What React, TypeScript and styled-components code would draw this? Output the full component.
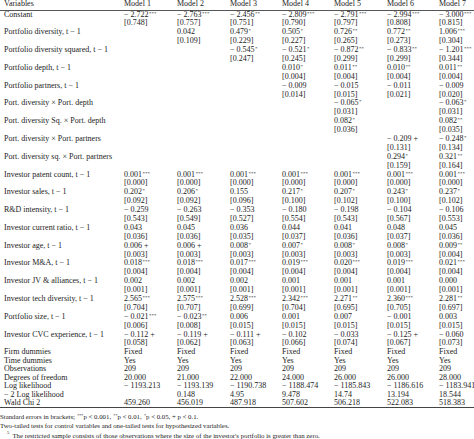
import { Fragment } from "react";
import styled, { createGlobalStyle } from "styled-components";

const GlobalStyle = createGlobalStyle`
    html, body {
        margin: 0;
        padding: 0;
        background: #ffffff;
        overflow: hidden;
    }
    body {
        font-family: "Liberation Serif", "DejaVu Serif", serif;
        color: #222222;
    }
`

const COLS = "120px 53px 53px 52px 52px 53px 52px 1fr"

const Page = styled.div`
    width: 474px;
    height: 439px;
    overflow: hidden;
    background: #ffffff;
`

const Head = styled.div`
    display: grid;
    grid-template-columns: ${COLS};
    padding-left: 4px;
    height: 9.5px;
    line-height: 8px;
    font-size: 8px;
    white-space: nowrap;
    border-bottom: 1px solid #555;
`

const Body = styled.div`
    display: flex;
    flex-direction: column;
    font-size: 8px;
    white-space: nowrap;
    border-bottom: 1px solid #444;
`

const Row = styled.div<{ $h: number }>`
    display: grid;
    grid-template-columns: ${COLS};
    padding-left: 4px;
    height: ${(props) => props.$h}px;
    line-height: ${(props) => props.$h}px;
    flex-shrink: 0;
`

const Cell = styled.div`
    overflow: visible;
`

const Stars = styled.span`
    font-size: 0.62em;
    vertical-align: 0.4em;
    line-height: 0;
    margin-left: 0.5px;
`

const Notes = styled.div`
    display: flex;
    flex-direction: column;
    padding-top: 3.3px;
    font-size: 6.8px;
    line-height: 9.5px;
    white-space: nowrap;
`

const Note = styled.div<{ $indent?: number }>`
    padding-left: ${(props) => props.$indent || 0}px;
`

const Mark = styled.sup`
    font-size: 0.7em;
    line-height: 0;
    margin-right: 3px;
`

type Entry = { label: string, coef: (string | null)[], se?: (string | null)[] }

const M = "\u2212 "
const PAIR_H = 8.9
const STAT_H = 8.45

const rows: Entry[] = [
    { label: "Constant",
      coef: [M+"2.722***", M+"2.763***", M+"2.456**", M+"2.809***", M+"2.791***", M+"2.994***", M+"3.000***"],
      se: ["[0.748]", "[0.757]", "[0.751]", "[0.790]", "[0.797]", "[0.808]", "[0.815]"] },
    { label: "Portfolio diversity, t \u2212 1",
      coef: [null, "0.042", "0.479*", "0.505*", "0.726**", "0.772**", "1.006***"],
      se: [null, "[0.109]", "[0.229]", "[0.227]", "[0.265]", "[0.273]", "[0.304]"] },
    { label: "Portfolio diversity squared, t \u2212 1",
      coef: [null, null, M+"0.545*", M+"0.521*", M+"0.872**", M+"0.833**", M+"1.201***"],
      se: [null, null, "[0.247]", "[0.245]", "[0.299]", "[0.299]", "[0.344]"] },
    { label: "Portfolio depth, t \u2212 1",
      coef: [null, null, null, "0.010*", "0.011**", "0.010**", "0.011**"],
      se: [null, null, null, "[0.004]", "[0.004]", "[0.004]", "[0.004]"] },
    { label: "Portfolio partners, t \u2212 1",
      coef: [null, null, null, M+"0.009", M+"0.015", M+"0.011", M+"0.009"],
      se: [null, null, null, "[0.014]", "[0.015]", "[0.021]", "[0.020]"] },
    { label: "Port. diversity \u00d7 Port. depth",
      coef: [null, null, null, null, M+"0.065*", null, M+"0.063*"],
      se: [null, null, null, null, "[0.031]", null, "[0.031]"] },
    { label: "Port. diversity Sq. \u00d7 Port. depth",
      coef: [null, null, null, null, "0.082*", null, "0.082**"],
      se: [null, null, null, null, "[0.036]", null, "[0.035]"] },
    { label: "Port. diversity \u00d7 Port. partners",
      coef: [null, null, null, null, null, M+"0.209 +", M+"0.248*"],
      se: [null, null, null, null, null, "[0.131]", "[0.134]"] },
    { label: "Port. diversity sq. \u00d7 Port. partners",
      coef: [null, null, null, null, null, "0.294*", "0.321**"],
      se: [null, null, null, null, null, "[0.159]", "[0.164]"] },
    { label: "Investor patent count, t \u2212 1",
      coef: Array(7).fill("0.001***"),
      se: Array(7).fill("[0.000]") },
    { label: "Investor sales, t \u2212 1",
      coef: ["0.202*", "0.206*", "0.155", "0.217*", "0.207*", "0.243*", "0.237*"],
      se: ["[0.092]", "[0.092]", "[0.096]", "[0.100]", "[0.102]", "[0.100]", "[0.102]"] },
    { label: "R&D intensity, t \u2212 1",
      coef: [M+"0.259", M+"0.263", M+"0.353", M+"0.180", M+"0.198", M+"0.104", M+"0.106"],
      se: ["[0.543]", "[0.549]", "[0.527]", "[0.554]", "[0.543]", "[0.567]", "[0.553]"] },
    { label: "Investor current ratio, t \u2212 1",
      coef: ["0.043", "0.045", "0.036", "0.044", "0.041", "0.048", "0.045"],
      se: ["[0.036]", "[0.036]", "[0.035]", "[0.037]", "[0.036]", "[0.037]", "[0.036]"] },
    { label: "Investor age, t \u2212 1",
      coef: ["0.006 +", "0.006 +", "0.008*", "0.007*", "0.008*", "0.008*", "0.009**"],
      se: ["[0.003]", "[0.003]", "[0.003]", "[0.003]", "[0.003]", "[0.003]", "[0.004]"] },
    { label: "Investor M&A, t \u2212 1",
      coef: ["0.018***", "0.018***", "0.017***", "0.019***", "0.020***", "0.019***", "0.021***"],
      se: Array(7).fill("[0.004]") },
    { label: "Investor JV & alliances, t \u2212 1",
      coef: ["0.002", "0.002", "0.002", "0.001", "0.001", "0.001", "0.000"],
      se: Array(7).fill("[0.001]") },
    { label: "Investor tech diversity, t \u2212 1",
      coef: ["2.565***", "2.575***", "2.528***", "2.342***", "2.271**", "2.360***", "2.281**"],
      se: ["[0.704]", "[0.707]", "[0.699]", "[0.704]", "[0.695]", "[0.705]", "[0.697]"] },
    { label: "Portfolio size, t \u2212 1",
      coef: [M+"0.021***", M+"0.023**", "0.006", "0.001", "0.007", M+"0.001", "0.003"],
      se: ["[0.006]", "[0.008]", "[0.015]", "[0.015]", "[0.015]", "[0.015]", "[0.015]"] },
    { label: "Investor CVC experience, t \u2212 1",
      coef: [M+"0.112 +", M+"0.119 +", M+"0.111 +", M+"0.102", M+"0.033", M+"0.125 +", M+"0.060"],
      se: ["[0.058]", "[0.062]", "[0.063]", "[0.066]", "[0.074]", "[0.067]", "[0.073]"] },
    { label: "Firm dummies", coef: Array(7).fill("Fixed") },
    { label: "Time dummies", coef: Array(7).fill("Yes") },
    { label: "Observations", coef: Array(7).fill("209") },
    { label: "Degrees of freedom",
      coef: ["20.000", "21.000", "22.000", "24.000", "26.000", "26.000", "28.000"] },
    { label: "Log likelihood",
      coef: [M+"1193.213", M+"1193.139", M+"1190.738", M+"1188.474", M+"1185.843", M+"1186.616", M+"1183.941"] },
    { label: M+"2 Log likelihood",
      coef: [null, "0.148", "4.95", "9.478", "14.74", "13.194", "18.544"] },
    { label: "Wald Chi 2",
      coef: ["459.260", "456.019", "487.918", "507.602", "506.218", "522.083", "518.383"] },
]

// splits the trailing asterisks off so they can sit raised
function Value({ text }: { text: string | null }) {
    if (!text) return <Cell />
    const m = text.match(/^(.*?)(\*+)$/)
    if (!m) return <Cell>{text}</Cell>
    return <Cell>{m[1]}<Stars>{m[2]}</Stars></Cell>
}

export default function App() {
    return (
        <Page>
            <GlobalStyle />
            <Head>
                <Cell>Variables</Cell>
                {[1, 2, 3, 4, 5, 6, 7].map((n) => <Cell key={n}>{`Model ${n}`}</Cell>)}
            </Head>
            <Body>
                {rows.map((r) => {
                    const h = r.se ? PAIR_H : STAT_H
                    return (
                        <Fragment key={r.label}>
                            <Row $h={h}>
                                <Cell>{r.label}</Cell>
                                {r.coef.map((c, i) => <Value key={i} text={c} />)}
                            </Row>
                            {r.se && (
                                <Row $h={h}>
                                    <Cell />
                                    {r.se.map((s, i) => <Value key={i} text={s} />)}
                                </Row>
                            )}
                        </Fragment>
                    )
                })}
            </Body>
            <Notes>
                <Note>Standard errors in brackets; <Stars>***</Stars>p &lt; 0.001, <Stars>**</Stars>p &lt; 0.01, <Stars>*</Stars>p &lt; 0.05, + p &lt; 0.1.</Note>
                <Note>Two-tailed tests for control variables and one-tailed tests for hypothesized variables.</Note>
                <Note $indent={7}><Mark>5</Mark>The restricted sample consists of those observations where the size of the investor's portfolio is greater than zero.</Note>
            </Notes>
        </Page>
    );
}
